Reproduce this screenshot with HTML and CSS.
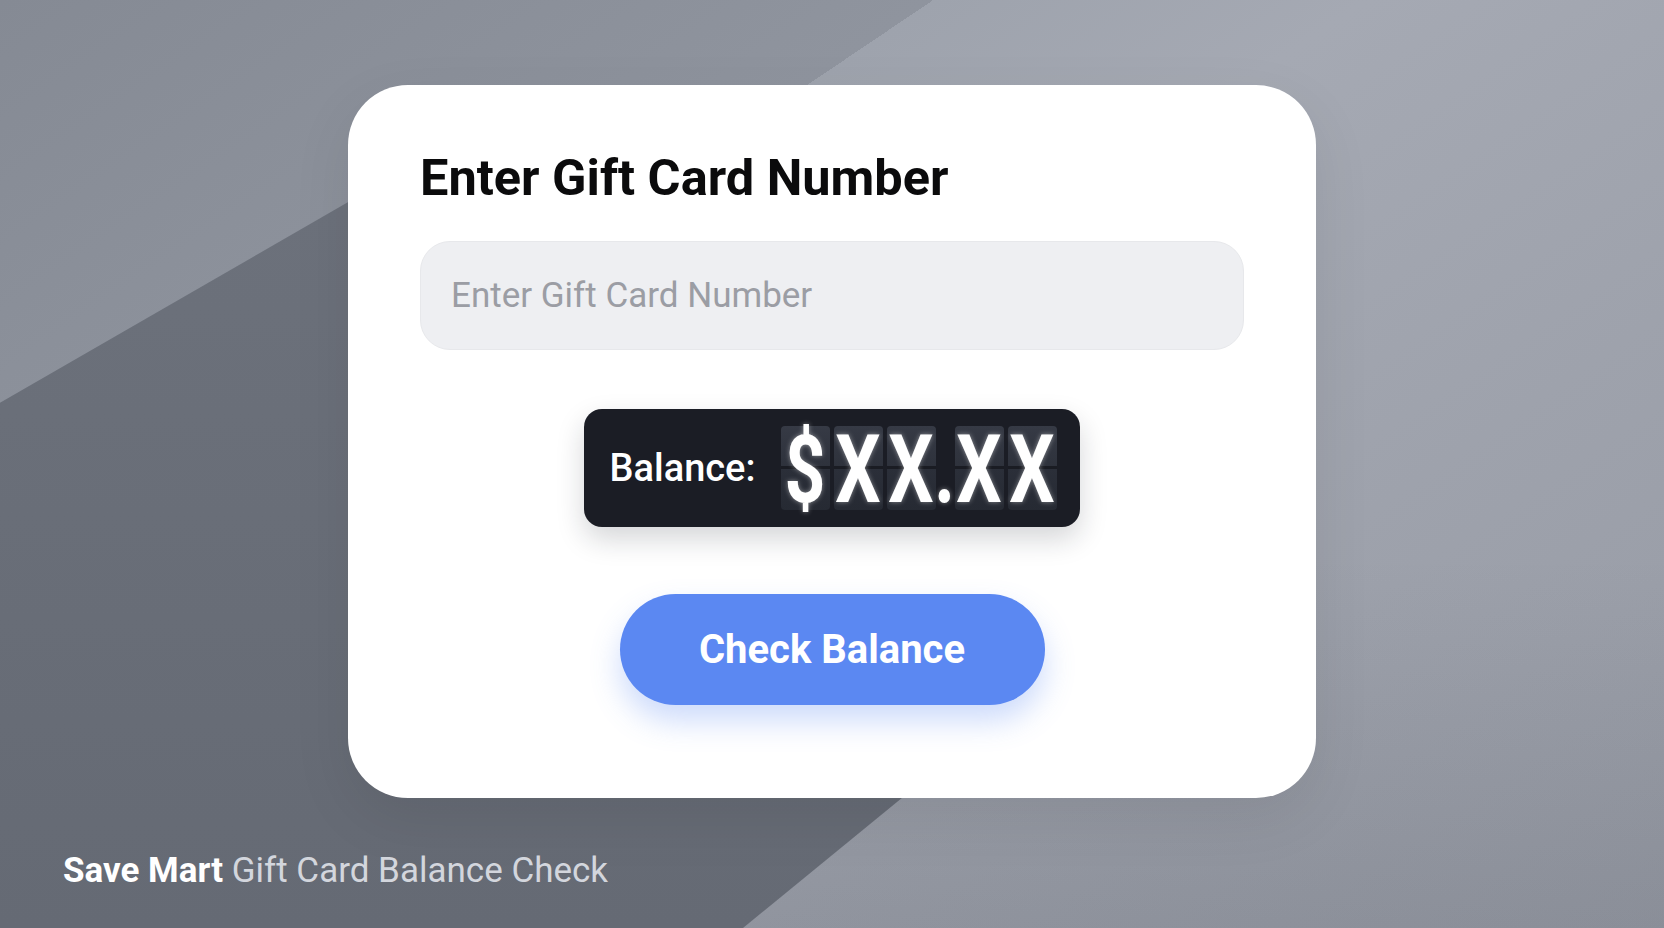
FILE: index.html
```html
<!DOCTYPE html>
<html lang="en">
<head>
    <meta charset="UTF-8">
    <meta name="viewport" content="width=device-width, initial-scale=1.0">
    <title>Save Mart Gift Card Balance Check</title>
    <link rel="stylesheet" href="styles.css">
</head>
<body>
    <div class="card">
        <h1>Enter Gift Card Number</h1>
        <input type="text" id="card-number" class="card-input" placeholder="Enter Gift Card Number">
        <div class="balance">
            <span class="balance-label">Balance:</span>
            <div class="flip">
                <span class="tile"><span class="glyph">$</span></span>
                <span class="tile"><span class="glyph">X</span></span>
                <span class="tile"><span class="glyph">X</span></span>
                <span class="dot"><span class="glyph">.</span></span>
                <span class="tile"><span class="glyph">X</span></span>
                <span class="tile"><span class="glyph">X</span></span>
            </div>
        </div>
        <button class="check-btn">Check Balance</button>
    </div>
    <p class="caption"><strong>Save Mart</strong> Gift Card Balance Check</p>
</body>
</html>
```

FILE: styles.css
```css
* {
    margin: 0;
    padding: 0;
    box-sizing: border-box;
}
body {
    font-family: Roboto, "Liberation Sans", sans-serif;
    height: 100vh;
    overflow: hidden;
    position: relative;
    padding-top: 85px;
    display: flex;
    flex-direction: column;
    background:
        linear-gradient(180deg, rgba(60,65,75,0) 60%, rgba(60,65,75,0.14) 100%),
        linear-gradient(146deg, #858a94 0%, #8f949e 30.7%, #9ea3ad 30.7%, #a5a9b3 45%, #9ea2ac 70%, #979ba5 100%);
}
/* long diagonal shadow falling to the lower left */
body::before {
    content: "";
    position: absolute;
    inset: 0;
    background: linear-gradient(180deg, #6e737d, #656a74);
    clip-path: polygon(20.9% 21.8%, 0 43.4%, 0 100%, 44.65% 100%, 54.2% 86%, 54.2% 30%);
    z-index: 0;
}
.card {
    position: relative;
    z-index: 1;
    width: 968px;
    height: 713px;
    margin: 0 auto;
    padding: 63px 72px 0;
    background-color: #ffffff;
    border-radius: 60px;
    box-shadow: 0 20px 60px rgba(0,0,0,0.08);
    display: flex;
    flex-direction: column;
    align-items: center;
}
h1 {
    align-self: stretch;
    font-size: 50.5px;
    line-height: 60px;
    font-weight: 700;
    color: #0b0b0c;
    margin-bottom: 33px;
}
.card-input {
    width: 100%;
    height: 109px;
    padding: 0 30px;
    border: 1px solid #e7e8eb;
    border-radius: 30px;
    background-color: #eeeff2;
    font-family: inherit;
    font-size: 35px;
    color: #333;
    outline: none;
}
.card-input::placeholder {
    color: #9b9da4;
}
.balance {
    margin-top: 59px;
    height: 118px;
    padding: 0 23px 0 25px;
    display: flex;
    align-items: center;
    gap: 25px;
    background-color: #1b1d25;
    border-radius: 18px;
    box-shadow: 0 12px 28px rgba(20,25,40,0.18);
}
.balance-label {
    color: #ffffff;
    font-size: 38px;
    font-weight: 500;
}
.flip {
    display: flex;
    align-items: flex-end;
    gap: 4px;
}
.tile {
    width: 49px;
    height: 84px;
    border-radius: 4px;
    background: linear-gradient(180deg, #363a45 0%, #2e323c 48%, #1a1c23 48%, #1a1c23 51%, #2b2f39 51%, #262a33 100%);
    display: flex;
    justify-content: center;
}
.dot {
    width: 11px;
    height: 84px;
    display: flex;
    justify-content: center;
}
.glyph {
    display: inline-block;
    color: #ffffff;
    font-size: 94px;
    font-weight: 700;
    line-height: 84px;
    padding-top: 2px;
    transform: scaleX(0.76);
    text-shadow: 0 0 6px rgba(255,255,255,0.45);
}
.check-btn {
    margin-top: 67px;
    width: 425px;
    height: 111px;
    border: none;
    border-radius: 56px;
    background-color: #5b88f2;
    color: #ffffff;
    font-family: inherit;
    font-size: 40px;
    font-weight: 700;
    cursor: pointer;
    box-shadow: 0 16px 30px rgba(91,136,242,0.3);
}
.caption {
    position: relative;
    z-index: 1;
    margin-top: 52px;
    padding-left: 63px;
    font-size: 35px;
    color: #d3d6dd;
}
.caption strong {
    color: #ffffff;
    font-weight: 700;
}
```
